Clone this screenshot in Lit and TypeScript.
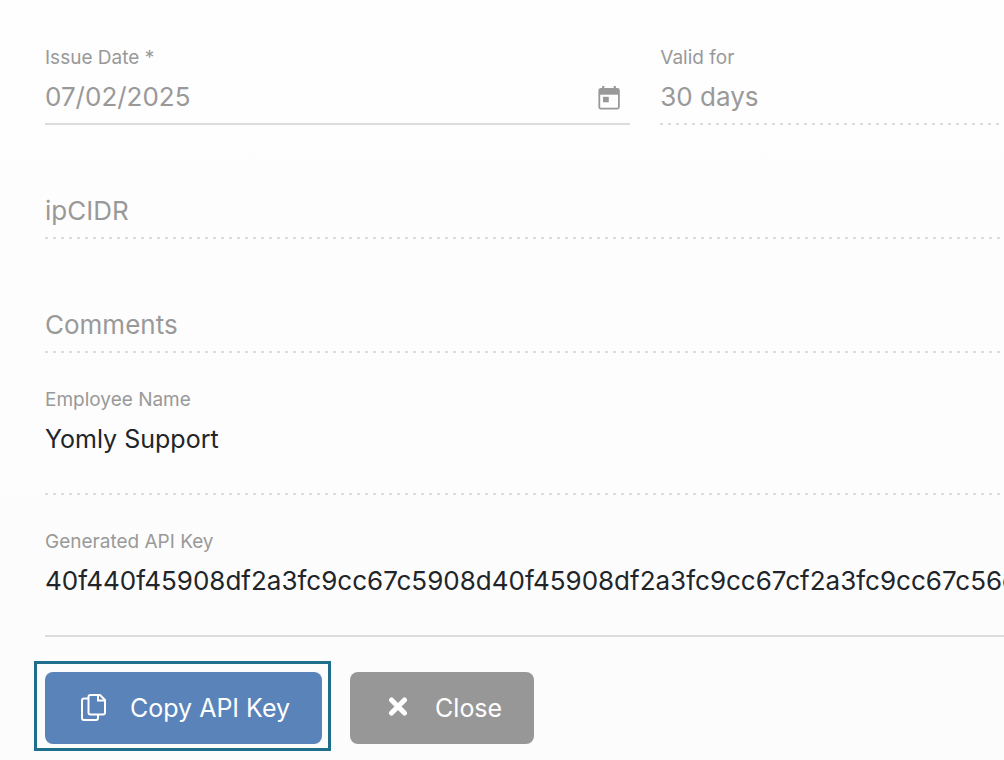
import { LitElement, html, css } from "lit";
import { customElement } from "lit/decorators.js";

@customElement("app-root")
export class AppRoot extends LitElement {
  static styles = css`
    :host {
      display: block;
      box-sizing: border-box;
      min-height: 100vh;
      padding: 45px 0 9px;
      overflow: hidden;
      background: linear-gradient(#fefefe, #fcfcfc);
      color: #212529;
      font-family: Inter, "Liberation Sans", sans-serif;
      font-size: 26px;
      line-height: 32px;
    }
    .fields {
      display: grid;
      grid-template-columns: 63fr 37fr;
      gap: 34px 30px;
      padding-left: 45px;
    }
    .field {
      display: grid;
      grid-template-columns: minmax(0, 1fr) auto;
      grid-template-rows: 26px 32px;
      row-gap: 10px;
      padding-bottom: 12px;
      background: linear-gradient(#dcdcdc, #dcdcdc) left bottom / 100% 2px no-repeat;
    }
    .wide {
      grid-column: 1 / -1;
    }
    .tall {
      padding-bottom: 40px;
    }
    .dotted {
      background: linear-gradient(90deg, #dcdcdc 3px, transparent 3px) left bottom / 8px 2px repeat-x;
    }
    .label {
      grid-column: 1 / -1;
      grid-row: 1;
      color: #999;
      font-size: 19px;
      line-height: 26px;
    }
    .label.resting {
      grid-row: 2;
      font-size: inherit;
      line-height: 32px;
      pointer-events: none;
      z-index: 1;
    }
    .input {
      grid-column: 1;
      grid-row: 2;
      width: 100%;
      height: 32px;
      box-sizing: border-box;
      margin: 0;
      padding: 0;
      border: 0;
      outline: 0;
      background: transparent;
      color: inherit;
      font: inherit;
    }
    .muted {
      color: #999;
    }
    .name {
      font-size: 25px;
    }
    .picker {
      grid-column: 2;
      grid-row: 2;
      display: flex;
      align-items: center;
      justify-content: center;
      width: 42px;
      height: 34px;
      padding: 0;
      border: 0;
      background: none;
      color: #999;
    }
    .actions {
      display: flex;
      align-items: flex-start;
      gap: 19px;
      padding: 24px 0 0 34px;
    }
    .highlight {
      padding: 8px 6px 4px 8px;
      border: 3px solid #1e6e8c;
    }
    .button {
      display: flex;
      align-items: center;
      gap: 21px;
      height: 72px;
      padding: 0 32px;
      border: 0;
      border-radius: 8px;
      color: #fff;
      font: inherit;
      font-size: 25px;
      white-space: nowrap;
    }
    .copy {
      background: #5a83b9;
    }
    .close {
      margin-top: 11px;
      background: #979797;
    }
    .slot {
      display: flex;
      justify-content: center;
      width: 32px;
    }
  `;

  render() {
    return html`
      <div class="fields">
        <div class="field">
          <label class="label" for="issue">Issue Date *</label>
          <input class="input muted" id="issue" type="text" value="07/02/2025" required />
          <button class="picker" type="button" aria-label="Open calendar">
            <svg width="22" height="24" viewBox="0 0 22 24" fill="none">
              <path d="M5.200 0v4M16.800 0v4" stroke="currentColor" stroke-width="2.2" />
              <rect x="1.300" y="3" width="19.600" height="19.600" rx="1.500" stroke="currentColor" stroke-width="1.800" />
              <path d="M1 3h20v5.700H1z" fill="currentColor" />
              <path d="M5 10.800h5.800v5.500H5z" fill="currentColor" />
            </svg>
          </button>
        </div>
        <div class="field dotted">
          <label class="label" for="valid">Valid for</label>
          <input class="input muted" id="valid" type="text" value="30 days" readonly />
        </div>
        <div class="field wide dotted">
          <label class="label resting" for="cidr">ipCIDR</label>
          <input class="input muted" id="cidr" type="text" readonly />
        </div>
        <div class="field wide dotted">
          <label class="label resting" for="comments">Comments</label>
          <input class="input muted" id="comments" type="text" readonly />
        </div>
        <div class="field wide tall dotted">
          <label class="label" for="employee">Employee Name</label>
          <input class="input name" id="employee" type="text" value="Yomly Support" readonly />
        </div>
        <div class="field wide tall">
          <label class="label" for="key">Generated API Key</label>
          <input
            class="input"
            id="key"
            type="text"
            value="40f440f45908df2a3fc9cc67c5908d40f45908df2a3fc9cc67cf2a3fc9cc67c56c"
            readonly
          />
        </div>
      </div>
      <div class="actions">
        <div class="highlight">
          <button class="button copy" type="button">
            <span class="slot">
              <svg width="26" height="28" viewBox="0 0 26 28" fill="none" stroke="#fff" stroke-width="2">
                <path d="M8.500 4.500H4Q2 4.500 2 6.500V24q0 2 2 2h12q2 0 2-2v-3.500" />
                <path d="M10.500 1H20l5 5v12.500q0 2-2 2H10.500q-2 0-2-2V3q0-2 2-2z" />
                <path d="M18 1v5.500h7" />
              </svg>
            </span>
            Copy API Key
          </button>
        </div>
        <button class="button close" type="button">
          <span class="slot">
            <svg width="20" height="22" viewBox="0 0 20 22" stroke="#fff" stroke-width="5" stroke-linecap="round">
              <path d="M3.500 3l13 13M16.500 3L3.500 16" />
            </svg>
          </span>
          Close
        </button>
      </div>
    `;
  }
}
